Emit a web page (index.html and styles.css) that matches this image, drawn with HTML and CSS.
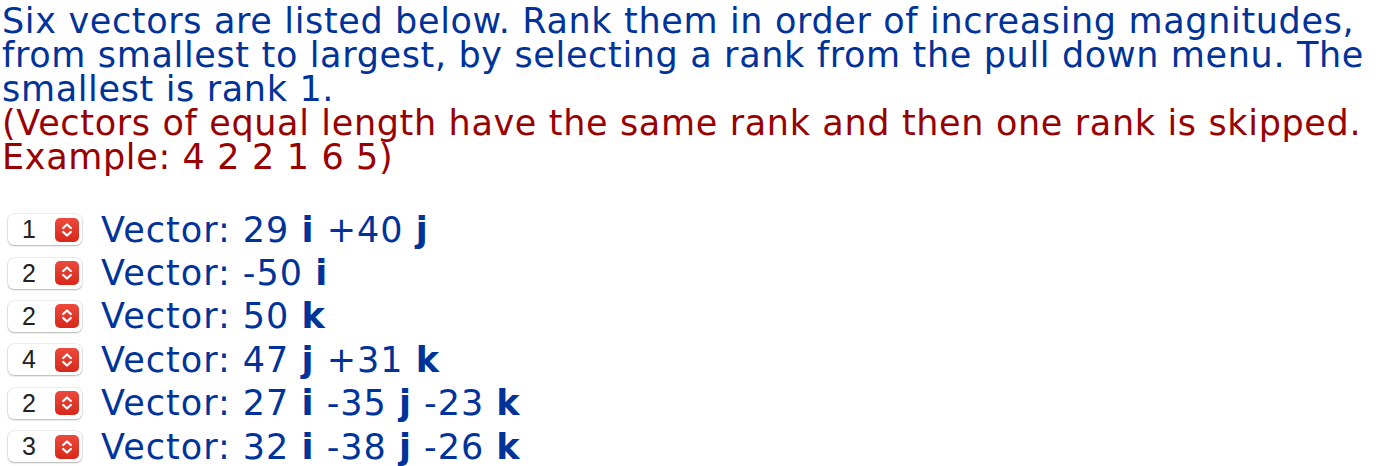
FILE: index.html
```html
<!DOCTYPE html>
<html>
<head>
<meta charset="utf-8">
<link rel="stylesheet" href="styles.css">
</head>
<body>
<div class="intro">
<p class="instr">Six vectors are listed below. Rank them in order of increasing magnitudes, from smallest to largest, by selecting a rank from the pull down menu. The smallest is rank 1.</p>
<p class="note">(Vectors of equal length have the same rank and then one rank is skipped. Example: 4 2 2 1 6 5)</p>
</div>
<div class="rows">
  <div class="row"><span class="sel"><span class="val">1</span><span class="btn"><svg viewBox="0 0 24 24" width="24" height="24"><path d="M8.2 10 L12 6.5 L15.8 10 M8.2 14 L12 17.5 L15.8 14" fill="none" stroke="#fff" stroke-width="2.3" stroke-linecap="round" stroke-linejoin="round"/></svg></span></span><span class="vec">Vector: 29 <b>i</b> +40 <b>j</b></span></div>
  <div class="row"><span class="sel"><span class="val">2</span><span class="btn"><svg viewBox="0 0 24 24" width="24" height="24"><path d="M8.2 10 L12 6.5 L15.8 10 M8.2 14 L12 17.5 L15.8 14" fill="none" stroke="#fff" stroke-width="2.3" stroke-linecap="round" stroke-linejoin="round"/></svg></span></span><span class="vec">Vector: -50 <b>i</b></span></div>
  <div class="row"><span class="sel"><span class="val">2</span><span class="btn"><svg viewBox="0 0 24 24" width="24" height="24"><path d="M8.2 10 L12 6.5 L15.8 10 M8.2 14 L12 17.5 L15.8 14" fill="none" stroke="#fff" stroke-width="2.3" stroke-linecap="round" stroke-linejoin="round"/></svg></span></span><span class="vec">Vector: 50 <b>k</b></span></div>
  <div class="row"><span class="sel"><span class="val">4</span><span class="btn"><svg viewBox="0 0 24 24" width="24" height="24"><path d="M8.2 10 L12 6.5 L15.8 10 M8.2 14 L12 17.5 L15.8 14" fill="none" stroke="#fff" stroke-width="2.3" stroke-linecap="round" stroke-linejoin="round"/></svg></span></span><span class="vec">Vector: 47 <b>j</b> +31 <b>k</b></span></div>
  <div class="row"><span class="sel"><span class="val">2</span><span class="btn"><svg viewBox="0 0 24 24" width="24" height="24"><path d="M8.2 10 L12 6.5 L15.8 10 M8.2 14 L12 17.5 L15.8 14" fill="none" stroke="#fff" stroke-width="2.3" stroke-linecap="round" stroke-linejoin="round"/></svg></span></span><span class="vec">Vector: 27 <b>i</b> -35 <b>j</b> -23 <b>k</b></span></div>
  <div class="row"><span class="sel"><span class="val">3</span><span class="btn"><svg viewBox="0 0 24 24" width="24" height="24"><path d="M8.2 10 L12 6.5 L15.8 10 M8.2 14 L12 17.5 L15.8 14" fill="none" stroke="#fff" stroke-width="2.3" stroke-linecap="round" stroke-linejoin="round"/></svg></span></span><span class="vec">Vector: 32 <b>i</b> -38 <b>j</b> -26 <b>k</b></span></div>
</div>
</body>
</html>
```
FILE: styles.css
```css
html, body {
  margin: 0;
  padding: 0;
  background: #fff;
}
body {
  font-family: "DejaVu Sans", Verdana, sans-serif;
  font-size: 35px;
  padding: 4px 0 0 2px;
}
.intro {
  line-height: 34px;
  letter-spacing: 0.65px;
}
.instr {
  margin: 0;
  color: #003399;
}
.note {
  margin: 0;
  color: #990000;
}
.rows {
  margin-top: 34px;
  display: flex;
  flex-direction: column;
}
.row {
  height: 43.4px;
  display: flex;
  align-items: center;
}
.sel {
  box-sizing: border-box;
  width: 74px;
  height: 31px;
  margin-left: 6px;
  margin-right: 19px;
  border-radius: 6px;
  background: #fff;
  box-shadow: 0 0 0 0.5px rgba(0,0,0,0.12), 0 1px 2px rgba(0,0,0,0.25);
  display: flex;
  align-items: center;
  justify-content: space-between;
  padding: 0 3px 0 14px;
}
.val {
  font-family: "Liberation Sans", Arial, sans-serif;
  font-size: 25px;
  line-height: 25px;
  color: #222;
}
.btn {
  width: 24px;
  height: 24px;
  border-radius: 5px;
  background: linear-gradient(#ec4a3c, #d7281a);
  display: flex;
}
.vec {
  color: #003399;
  line-height: 34px;
  letter-spacing: 1px;
}
.vec b {
  font-weight: bold;
}
```
